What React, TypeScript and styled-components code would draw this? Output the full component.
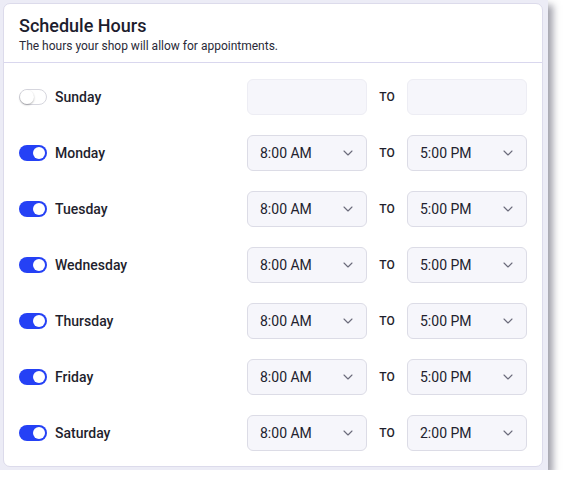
import { createGlobalStyle, styled, css } from 'styled-components'

const GlobalStyle = createGlobalStyle`
  body {
    margin: 0;
    background: #ffffff;
    font-family: Roboto, "Liberation Sans", sans-serif;
  }
`

type Day = { name: string; on: boolean; from?: string; to?: string }

const DAYS: Day[] = [
  { name: 'Sunday', on: false },
  { name: 'Monday', on: true, from: '8:00 AM', to: '5:00 PM' },
  { name: 'Tuesday', on: true, from: '8:00 AM', to: '5:00 PM' },
  { name: 'Wednesday', on: true, from: '8:00 AM', to: '5:00 PM' },
  { name: 'Thursday', on: true, from: '8:00 AM', to: '5:00 PM' },
  { name: 'Friday', on: true, from: '8:00 AM', to: '5:00 PM' },
  { name: 'Saturday', on: true, from: '8:00 AM', to: '2:00 PM' },
]

const Chevron = () => (
  <svg width="10" height="6" viewBox="0 0 10 6" fill="none">
    <path d="M1 1l4 4 4-4" stroke="#6b6b7b" strokeWidth="1.1" strokeLinecap="round" strokeLinejoin="round" />
  </svg>
)

const TimeSelect = ({ value }: { value?: string }) => (
  <SelectBox disabled={!value}>
    {value && (
      <>
        <span>{value}</span>
        <Chevron />
      </>
    )}
  </SelectBox>
)

const App = () => {
  return (
    <>
      <GlobalStyle />
      <Frame>
        <Card>
          <Header>
            <Title>Schedule Hours</Title>
            <Subtitle>The hours your shop will allow for appointments.</Subtitle>
          </Header>
          <Rows>
            {DAYS.map((d) => (
              <Row key={d.name}>
                <DayCell>
                  <Toggle on={d.on}>
                    <Knob on={d.on} />
                  </Toggle>
                  <DayName>{d.name}</DayName>
                </DayCell>
                <TimeSelect value={d.from} />
                <ToLabel>TO</ToLabel>
                <TimeSelect value={d.to} />
              </Row>
            ))}
          </Rows>
        </Card>
      </Frame>
    </>
  )
}

// 바깥 프레임 (스크린샷 그림자)
const Frame = styled.div`
  width: 548px;
  height: 470px;
  box-sizing: border-box;
  padding: 3px 5px 3px 3px;
  background: #ececf6;
  box-shadow: 5px 5px 7px rgba(70, 70, 90, 0.5);
`

const Card = styled.div`
  box-sizing: border-box;
  height: 464px;
  background: #ffffff;
  border: 1px solid #dcdbeb;
  border-radius: 7px;
`

const Header = styled.div`
  padding: 11px 15px 8px;
  border-bottom: 1px solid #d9d7ee;
`

const Title = styled.h1`
  margin: 0;
  font-size: 18px;
  font-weight: 500;
  line-height: 22px;
  color: #1d1d2e;
`

const Subtitle = styled.p`
  margin: 2px 0 0;
  font-size: 12px;
  line-height: 15px;
  color: #2a2a38;
`

const Rows = styled.div`
  display: flex;
  flex-direction: column;
  gap: 20px;
  padding: 16px 15px 0;
`

const Row = styled.div`
  display: flex;
  align-items: center;
  height: 36px;
`

const DayCell = styled.div`
  display: flex;
  align-items: center;
  gap: 8px;
  width: 228px;
`

const Toggle = styled.div<{ on: boolean }>`
  position: relative;
  box-sizing: border-box;
  width: 28px;
  height: 16px;
  border-radius: 8px;
  ${({ on }) =>
    on
      ? css`
          background: #2541f5;
        `
      : css`
          background: #ffffff;
          border: 1px solid #d6d6de;
        `}
`

const Knob = styled.div<{ on: boolean }>`
  position: absolute;
  top: ${({ on }) => (on ? '2px' : '0px')};
  width: ${({ on }) => (on ? '12px' : '14px')};
  height: ${({ on }) => (on ? '12px' : '14px')};
  border-radius: 50%;
  background: #ffffff;
  ${({ on }) =>
    on
      ? css`
          right: 2px;
        `
      : css`
          left: 0;
          box-shadow: 0 1px 2px rgba(0, 0, 0, 0.3);
        `}
`

const DayName = styled.span`
  font-size: 14px;
  font-weight: 500;
  color: #1f1f2e;
`

const SelectBox = styled.div<{ disabled: boolean }>`
  box-sizing: border-box;
  width: 120px;
  height: 36px;
  display: flex;
  align-items: center;
  justify-content: space-between;
  padding: 0 13px 0 12px;
  border-radius: 6px;
  font-size: 14px;
  color: #22222e;
  background: #f6f6fb;
  border: 1px solid ${({ disabled }) => (disabled ? '#ededf4' : '#dcdce6')};
`

const ToLabel = styled.span`
  width: 40px;
  text-align: center;
  font-size: 12px;
  font-weight: 500;
  color: #1f1f2e;
`

export default App
